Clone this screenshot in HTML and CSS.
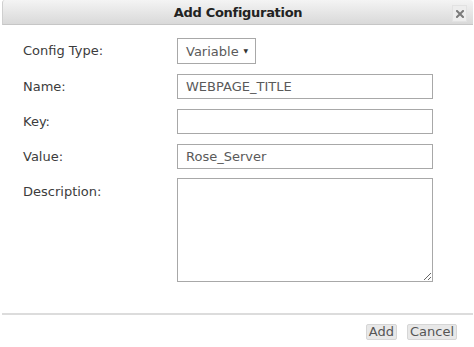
FILE: index.html
```html
<!DOCTYPE html>
<html>
<head>
<meta charset="utf-8">
<link rel="stylesheet" href="styles.css">
</head>
<body>
<div class="dialog">
  <div class="titlebar">
    <span class="title">Add Configuration</span>
    <span class="close"><svg width="8" height="8" viewBox="0 0 8 8"><path d="M1 1 L7 7 M7 1 L1 7" stroke="#7a7a7a" stroke-width="2" stroke-linecap="square"/></svg></span>
  </div>
  <div class="form">
    <label class="lbl">Config Type:</label>
    <div class="selectwrap">
      <span class="selval">Variable</span>
      <span class="arrow">▼</span>
    </div>
    <label class="lbl">Name:</label>
    <input class="field" type="text" value="WEBPAGE_TITLE">
    <label class="lbl">Key:</label>
    <input class="field" type="text" value="">
    <label class="lbl">Value:</label>
    <input class="field" type="text" value="Rose_Server">
    <label class="lbl">Description:</label>
    <textarea class="area"></textarea>
  </div>
  <div class="footer">
    <button class="btn">Add</button>
    <button class="btn">Cancel</button>
  </div>
</div>
</body>
</html>
```
FILE: styles.css
```css
html, body {
  margin: 0;
  padding: 0;
  background: #fff;
}
.dialog {
  width: 472px;
  height: 347px;
  margin-left: 1px;
  font-family: "DejaVu Sans", Verdana, sans-serif;
  font-size: 13px;
  color: #3c3c3c;
  display: flex;
  flex-direction: column;
}
.titlebar {
  height: 25px;
  box-sizing: border-box;
  margin-left: 1px;
  background: linear-gradient(#f4f4f4, #d9d9d9);
  border-bottom: 1px solid #c6c6c6;
  border-left: 1px solid #cfcfcf;
  border-radius: 3px 3px 0 0;
  position: relative;
  display: flex;
  align-items: center;
  justify-content: center;
}
.title {
  font-weight: bold;
  font-size: 13px;
  color: #222;
  letter-spacing: -0.3px;
}
.close {
  position: absolute;
  right: 6px;
  top: 5px;
  width: 15px;
  height: 17px;
  background: #ededed;
  border: 1px solid #e2e2e2;
  box-sizing: border-box;
  display: flex;
  align-items: center;
  justify-content: center;
}
.close svg {
  display: block;
}
.form {
  display: grid;
  grid-template-columns: 154px 256px;
  row-gap: 10px;
  padding: 13px 0 0 22px;
  align-items: start;
}
.lbl {
  padding-top: 5px;
  color: #3c3c3c;
}
.selectwrap {
  width: 79px;
  height: 26px;
  box-sizing: border-box;
  border: 1px solid #a8a8a8;
  position: relative;
  display: flex;
  align-items: center;
  padding-left: 8px;
  color: #5a5a5a;
}
.arrow {
  position: absolute;
  right: 7px;
  top: 8px;
  font-size: 6px;
  color: #333;
}
.field {
  display: block;
  width: 256px;
  height: 25px;
  box-sizing: border-box;
  border: 1px solid #a8a8a8;
  padding: 0 8px;
  margin: 0;
  font-family: "DejaVu Sans", Verdana, sans-serif;
  font-size: 13px;
  color: #5a5a5a;
  outline: none;
}
.area {
  display: block;
  width: 256px;
  height: 104px;
  box-sizing: border-box;
  border: 1px solid #a8a8a8;
  margin: 0;
  font-family: "DejaVu Sans", Verdana, sans-serif;
  font-size: 13px;
  margin-top: -1px;
}
.footer {
  margin-top: 31px;
  margin-left: 1px;
  border-top: 2px solid #dcdcdc;
  display: flex;
  justify-content: flex-end;
  gap: 10px;
  padding: 9px 16px 0 0;
}
.btn {
  font-family: "DejaVu Sans", Verdana, sans-serif;
  font-size: 13px;
  color: #555;
  background: #e8e8e8;
  border: 1px solid #d6d6d6;
  border-radius: 2px;
  padding: 0 2px;
  height: 16px;
  line-height: 14px;
}
```
